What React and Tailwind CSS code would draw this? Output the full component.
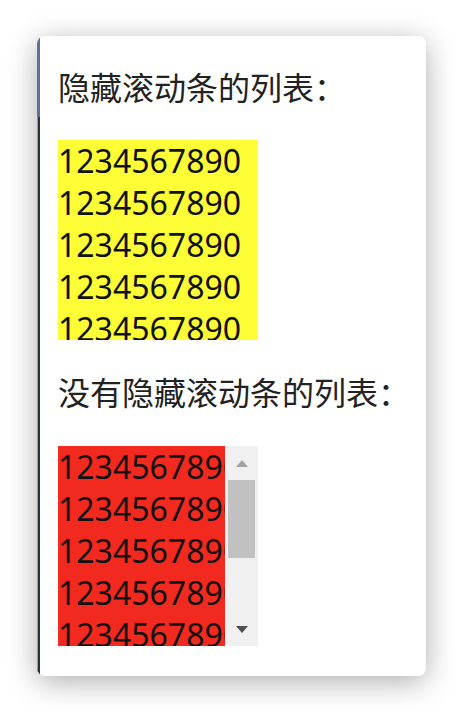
import React from 'react';

const rows = [1, 2, 3, 4, 5, 6, 7, 8];

const ScrollList = ({ hideScrollbar }) => {
  if (hideScrollbar) {
    return (
      <div className="h-[200px] w-[200px] overflow-hidden bg-[#fefe36] text-[#111]">
        {rows.map((r) => (
          <div key={r} className="h-[42px] leading-[42px] whitespace-nowrap">
            1234567890
          </div>
        ))}
      </div>
    );
  }

  // lista con barra de desplazamiento visible (dibujada a mano)
  return (
    <div className="flex h-[200px] w-[200px]">
      <div className="w-[167px] overflow-hidden bg-[#f1291f] text-[#111]">
        {rows.map((r) => (
          <div key={r} className="h-[42px] leading-[42px] whitespace-nowrap">
            1234567890
          </div>
        ))}
      </div>
      <div className="flex w-[33px] flex-col bg-[#f0f0f0]">
        <div className="flex h-[34px] items-center justify-center">
          <svg width="12" height="7" viewBox="0 0 12 7">
            <polygon points="6,0 12,7 0,7" fill="#a3a3a3" />
          </svg>
        </div>
        <div className="mx-[3px] h-[78px] bg-[#c1c1c1]" />
        <div className="flex-1" />
        <div className="flex h-[34px] items-center justify-center">
          <svg width="12" height="7" viewBox="0 0 12 7">
            <polygon points="0,0 12,0 6,7" fill="#505050" />
          </svg>
        </div>
      </div>
    </div>
  );
};

const App = () => {
  return (
    <div
      className="min-h-[712px] bg-white pl-[37px] pt-[36px]"
      style={{ fontFamily: '"Noto Sans", "Noto Sans CJK SC", sans-serif' }}
    >
      <div className="flex h-[640px] w-[389px] overflow-hidden rounded-lg bg-white shadow-[0_6px_30px_rgba(0,0,0,0.32)]">
        <div className="flex w-[3px] flex-col">
          <div className="h-[81px] bg-[#5b7196]" />
          <div className="flex-1 border-l border-[#8f9bb0] bg-[#2e333b]" />
        </div>
        <div className="pl-[18px] pt-[31px] text-[32px]">
          <p className="mb-[31px] h-[42px] leading-[42px] text-[#222]">隐藏滚动条的列表：</p>
          <ScrollList hideScrollbar />
          <p className="mb-[32px] mt-[32px] h-[42px] leading-[42px] text-[#222]">没有隐藏滚动条的列表：</p>
          <ScrollList />
        </div>
      </div>
    </div>
  );
};

export default App;
